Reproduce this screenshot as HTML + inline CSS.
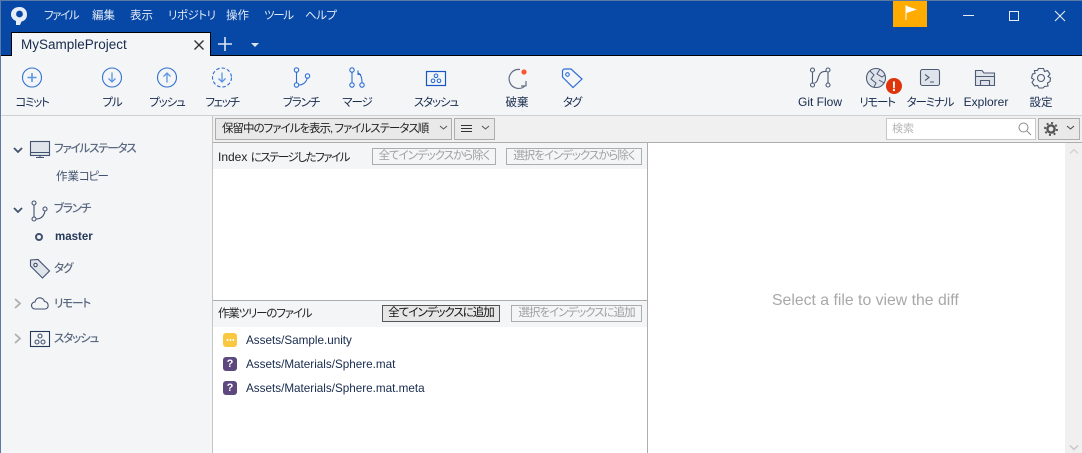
<!DOCTYPE html>
<html><head><meta charset="utf-8">
<style>
*{box-sizing:border-box}
html,body{margin:0;padding:0}
body{width:1082px;height:453px;position:relative;overflow:hidden;background:#fff;font-family:"Liberation Sans","Noto Sans CJK JP",sans-serif;font-size:11.5px;color:#172b4d;font-feature-settings:"palt" 1;font-kerning:normal}
div,span.a,svg{position:absolute}
.t{white-space:nowrap;line-height:16px}
.m{color:#dfe8f5;top:8px;font-size:11.5px}
.l{color:#172b4d;top:95px;font-size:11.5px;transform:translateX(-50%)}
.e{font-size:12px;top:94px}
.k{letter-spacing:-1.1px}
.s{color:#5a6880;font-weight:500;font-size:11.5px;letter-spacing:-1.1px}
.b{border:1px solid #adadad;color:#a0a0a0;text-align:center;font-size:11.5px;line-height:14px;letter-spacing:-1px;white-space:nowrap;height:17px;background:#f4f5f7}
.f{color:#172b4d;font-size:11.7px;left:246px}
</style></head><body>
<div style="left:0;top:0;width:1082px;height:55px;background:#0747a6"></div>
<div style="left:0;top:0;width:1082px;height:1px;background:#5b7ba5"></div>
<div style="left:0;top:55px;width:1082px;height:1px;background:#000"></div>
<svg style="left:10px;top:6px" width="20" height="20" viewBox="0 0 20 20"><path d="M6 19 L6 15 C2.500 13.500 1 11 1 8.500 C1 4 4.500 1 9.500 1 C14 1 17 4 17 8.500 C17 12.500 14.500 15 11.500 15.500 L10 19 Z" fill="#e6edf6"/><circle cx="9.500" cy="8" r="3.400" fill="#0747a6"/></svg>
<div class="t m k" style="left:44px;letter-spacing:-1.400px">ファイル</div>
<div class="t m" style="left:92px">編集</div>
<div class="t m" style="left:130px">表示</div>
<div class="t m" style="left:168px;letter-spacing:-.5px">リポジトリ</div>
<div class="t m" style="left:226px">操作</div>
<div class="t m" style="left:264px;letter-spacing:-1.300px">ツール</div>
<div class="t m" style="left:305px;letter-spacing:-.5px">ヘルプ</div>
<div style="left:11px;top:32px;width:200px;height:24px;background:#f4f5f7;border:1px solid #000;border-bottom:none"></div>
<div class="t" style="left:21px;top:37px;font-size:13.500px;color:#172b4d">MySampleProject</div>
<svg style="left:193px;top:39px" width="12" height="12"><path d="M1.500 1.500L10.500 10.500M10.500 1.500L1.500 10.500" stroke="#333" stroke-width="1.400"/></svg>
<svg style="left:217px;top:36px" width="16" height="16"><path d="M8 1V15M1 8H15" stroke="#dce6f2" stroke-width="1.600"/></svg>
<svg style="left:250px;top:42px" width="10" height="6"><path d="M1 1H9L5 5Z" fill="#dce6f2"/></svg>
<div style="left:893px;top:1px;width:34px;height:26px;background:#ffab00"></div>
<svg style="left:905px;top:5px" width="14" height="16"><path d="M1 0V15" stroke="#fff" stroke-width="1"/><path d="M1.500 1L12 4.500 1.500 8Z" fill="#fff"/></svg>
<div style="left:963px;top:15px;width:11px;height:1px;background:#e6edf6"></div>
<div style="left:1009px;top:11px;width:10px;height:10px;border:1px solid #e6edf6"></div>
<svg style="left:1054px;top:10px" width="12" height="12"><path d="M1 1L11 11M11 1L1 11" stroke="#e6edf6" stroke-width="1.100"/></svg>

<div style="left:0;top:56px;width:1082px;height:60px;background:#f4f5f7"></div>
<div style="left:0;top:115px;width:1082px;height:1px;background:#d0d0d0"></div>
<!-- toolbar icons -->
<svg style="left:0;top:56px" width="1082" height="40" fill="none" stroke-width="1.100">
<g stroke="#2f6fd4">
<circle cx="32" cy="21.500" r="9.500"/><path d="M32 17V26M27.500 21.500H36.500" stroke="#5c93e6" stroke-width="1.600"/>
<circle cx="112" cy="21.500" r="9.500"/><path d="M112 16.500V26M108.500 22.500L112 26 115.500 22.500" stroke="#5c93e6" stroke-width="1.300"/>
<circle cx="167" cy="21.500" r="9.500"/><path d="M167 17V26.500M163.500 20.500L167 17 170.500 20.500" stroke="#5c93e6" stroke-width="1.300"/>
<circle cx="222" cy="21.500" r="9.500" stroke-dasharray="3.500 2"/><path d="M222 16.500V26M218.500 22.500L222 26 225.500 22.500" stroke="#5c93e6" stroke-width="1.300"/>
<circle cx="296.500" cy="14" r="2.200"/><circle cx="296.500" cy="29" r="2.200"/><circle cx="307.500" cy="20" r="2.200"/>
<path d="M296.500 16.200V26.800M298.700 29C303 29 306.500 26 307.200 22.200"/>
<circle cx="352" cy="14" r="2.200"/><circle cx="352" cy="29" r="2.200"/><circle cx="362" cy="29" r="2.200"/>
<path d="M352 16.200V26.800M358 17C360.500 18 362 21 362 26.800M358 14.500V18.500H361"/>
<rect x="426.500" y="15.500" width="19" height="14" stroke-width="1.200" stroke="#1558c4"/>
<circle cx="436" cy="19.800" r="1.800"/><circle cx="433" cy="24.800" r="1.800"/><circle cx="439" cy="24.800" r="1.800"/>
<path d="M562.500 14.500V21L573 31.500 582 23 571 13H564Z" stroke-width="1.200"/><circle cx="567.500" cy="18.500" r="1.800"/>
</g>
<path d="M520 13.500A9.500 9.500 0 1 0 525.500 29.500M521 30L526 29.800 526 25" stroke="#5e6c84" stroke-width="1.200"/>
<circle cx="524" cy="16" r="2.600" fill="#ff5630" stroke="none"/>
<g stroke="#4d5b75" stroke-width="1.100">
<circle cx="812.500" cy="14" r="2"/><circle cx="812.500" cy="29" r="2"/><circle cx="828" cy="14" r="2"/><circle cx="828" cy="29" r="2"/>
<path d="M812.500 16V27M828 16V27M814.500 27C820 26 816 15 826 15.500"/>
<circle cx="876" cy="22" r="9.500" fill="#dfe3ea"/><path d="M870 15L874 19 871 23 876 27 874 31M880 13L877 18 882 21 885 19M879 24L884 27" stroke-width="1"/>
<rect x="920.500" y="13.500" width="19" height="16" rx="2" fill="#dfe3ea"/><path d="M925 18.500L929 21.500 925 24.500M930 26H934"/>
<path d="M975.500 14.500H982L984 17H994.500V29.500H975.500Z" fill="#dfe3ea"/><path d="M980.500 29.500V24.500H989.500V29.500M975.500 20.500H994.500"/>
<circle cx="1041" cy="22" r="3.500"/><path d="M1038.500 12.500H1043.500L1044.500 15.500 1047.500 14.500 1050 18 1048 20.500 1050.500 22 1050 25.500 1047.500 27 1048 30 1044.500 30.500 1043 32H1039L1037.500 29.500 1034.500 30 1032 26.500 1034 23.500 1031.500 22 1032.500 18 1035 17.500 1034.500 14.500 1037.500 14.500Z"/>
</g>
<circle cx="894" cy="30" r="8" fill="#de350b"/>
</svg>
<div class="t" style="left:889px;top:78px;width:10px;text-align:center;color:#fff;font-weight:bold;font-size:14px">!</div>
<div class="t l k" style="left:32px;letter-spacing:-1.300px">コミット</div>
<div class="t l k" style="left:112px">プル</div>
<div class="t l k" style="left:167px">プッシュ</div>
<div class="t l k" style="left:222px;letter-spacing:-1.300px">フェッチ</div>
<div class="t l k" style="left:301px">ブランチ</div>
<div class="t l k" style="left:357px">マージ</div>
<div class="t l k" style="left:436px">スタッシュ</div>
<div class="t l" style="left:517px">破棄</div>
<div class="t l k" style="left:572px">タグ</div>
<div class="t l e" style="left:820px">Git Flow</div>
<div class="t l k" style="left:877px;letter-spacing:-1.300px">リモート</div>
<div class="t l k" style="left:930px;letter-spacing:-1.200px">ターミナル</div>
<div class="t l e" style="left:986px">Explorer</div>
<div class="t l" style="left:1041px">設定</div>

<!-- sidebar -->
<div style="left:0;top:116px;width:213px;height:337px;background:#f4f5f7;border-right:1px solid #c4c4c4"></div>
<div style="left:0;top:0;width:1px;height:453px;background:#5b7ba5"></div>
<svg style="left:0;top:116px" width="212" height="240" fill="none" stroke-width="1.100">
<path d="M14 32L18 36 22 32M14 92L18 96 22 92" stroke="#42526e" stroke-width="1.800"/>
<path d="M15 183L20 187.500 15 192M15 218L20 222.500 15 227" stroke="#b0b0b0" stroke-width="1.800"/>
<g stroke="#42526e">
<rect x="30.500" y="25.500" width="19" height="14" fill="#dfe3ea"/><path d="M30.500 36.500H49.500M36 41.500H44M40 40V41"/>
<circle cx="34" cy="87" r="2"/><circle cx="34" cy="103" r="2"/><circle cx="45" cy="93" r="2"/><path d="M34 89V101M36 103C41 103 44 100 45 95"/>
<circle cx="39" cy="121" r="3" stroke-width="2"/>
<path d="M30.500 144V150L42.500 162 49.500 155 38 143.500Z" fill="#dfe3ea"/><circle cx="35.500" cy="149" r="1.700" fill="#f4f5f7"/>
<path d="M35 193A3.500 3.500 0 0 1 35 186C36 180.500 43 180.500 44.500 185.500C49 185.500 49.500 193 45 193Z"/>
<rect x="30.500" y="215.500" width="19" height="15" fill="#f4f5f7" stroke="#253858"/><circle cx="40" cy="220" r="2"/><circle cx="37" cy="226" r="2"/><circle cx="43" cy="226" r="2"/>
</g>
</svg>
<div class="t s" style="left:54px;top:141px;letter-spacing:-1.200px">ファイルステータス</div>
<div class="t" style="left:56px;top:169px;color:#42526e">作業<span style="letter-spacing:-1.500px">コピー</span></div>
<div class="t s" style="left:54px;top:201px">ブランチ</div>
<div class="t" style="left:55px;top:229px;font-weight:bold;font-size:11.500px;color:#253858">master</div>
<div class="t s" style="left:54px;top:261px">タグ</div>
<div class="t s" style="left:54px;top:296px">リモート</div>
<div class="t s" style="left:54px;top:331px">スタッシュ</div>

<!-- filter bar -->
<div style="left:213px;top:116px;width:869px;height:27px;background:#f0f0f0;border-bottom:1px solid #adadad"></div>
<div style="left:215px;top:118px;width:237px;height:22px;background:#e9e9e9;border:1px solid #adadad"></div>
<div class="t" style="left:222px;top:121px;color:#222;letter-spacing:-1px">保留中のファイルを表示, ファイルステータス順</div>
<svg style="left:439px;top:125px" width="9" height="6"><path d="M1 1L4.500 4 8 1" fill="none" stroke="#555"/></svg>
<div style="left:454px;top:118px;width:41px;height:22px;background:#e9e9e9;border:1px solid #adadad"></div>
<svg style="left:461px;top:124px" width="12" height="10"><path d="M0 1.500H11M0 4.500H11M0 7.500H11" stroke="#333"/></svg>
<svg style="left:481px;top:125px" width="9" height="6"><path d="M1 1L4.500 4 8 1" fill="none" stroke="#555"/></svg>
<div style="left:886px;top:118px;width:150px;height:22px;background:#fff;border:1px solid #c8c8c8"></div>
<div class="t" style="left:892px;top:121px;font-size:11px;color:#b5b5b5">検索</div>
<svg style="left:1018px;top:122px" width="14" height="14" fill="none" stroke="#8a8a8a"><circle cx="5.500" cy="5.500" r="4.500"/><path d="M9 9L13 13"/></svg>
<div style="left:1038px;top:118px;width:42px;height:22px;background:#e9e9e9;border:1px solid #adadad"></div>
<svg style="left:1044px;top:122px" width="14" height="14"><circle cx="7" cy="7" r="3.600" fill="none" stroke="#555" stroke-width="2.400"/><circle cx="7" cy="7" r="6" fill="none" stroke="#555" stroke-width="2" stroke-dasharray="2 2.700"/></svg>
<svg style="left:1066px;top:125px" width="9" height="6"><path d="M1 1L4.500 4 8 1" fill="none" stroke="#444"/></svg>

<!-- panels -->
<div style="left:213px;top:143px;width:434px;height:26px;background:#f4f5f7"></div>
<div class="t" style="left:218px;top:149px;color:#222"><span style="font-size:12px">Index </span><span style="letter-spacing:-1.500px">にステージしたファイル</span></div>
<div class="b" style="left:372px;top:148px;width:124px">全てインデックスから除く</div>
<div class="b" style="left:506px;top:148px;width:136px">選択をインデックスから除く</div>
<div style="left:213px;top:300px;width:434px;height:1px;background:#adadad"></div>
<div style="left:213px;top:301px;width:434px;height:26px;background:#f4f5f7"></div>
<div class="t" style="left:218px;top:306px;color:#222;letter-spacing:-1.200px">作業ツリーのファイル</div>
<div class="b" style="left:382px;top:305px;width:118px;color:#111;background:#e6e6e6;border-color:#555">全てインデックスに追加</div>
<div class="b" style="left:511px;top:305px;width:131px">選択をインデックスに追加</div>
<div style="left:647px;top:143px;width:1px;height:310px;background:#adadad"></div>

<div style="left:223px;top:333px;width:14px;height:14px;border-radius:3px;background:#f9c740"></div>
<div style="left:226px;top:339px;width:8px;height:2px;background-image:radial-gradient(circle,#fff 1px,transparent 1px);background-size:3px 2px"></div>
<div style="left:223px;top:357px;width:14px;height:14px;border-radius:3px;background:#5e4880;color:#fff;font-weight:bold;font-size:11px;line-height:14px;text-align:center">?</div>
<div style="left:223px;top:381px;width:14px;height:14px;border-radius:3px;background:#5e4880;color:#fff;font-weight:bold;font-size:11px;line-height:14px;text-align:center">?</div>
<div class="t f" style="top:333px">Assets/Sample.unity</div>
<div class="t f" style="top:357px">Assets/Materials/Sphere.mat</div>
<div class="t f" style="top:381px">Assets/Materials/Sphere.mat.meta</div>

<div class="t" style="left:772px;top:292px;font-size:15.800px;line-height:18px;color:#a8a8a8">Select a file to view the diff</div>
<div style="left:1065px;top:143px;width:17px;height:310px;background:#f0f0f0"></div>
<svg style="left:1069px;top:148px" width="10" height="7"><path d="M1 5.500L5 1.500 9 5.500" fill="none" stroke="#d4d4d4" stroke-width="1.500"/></svg>
<svg style="left:1069px;top:444px" width="10" height="7"><path d="M1 1.500L5 5.500 9 1.500" fill="none" stroke="#c8c8c8" stroke-width="1.500"/></svg>
</body></html>
